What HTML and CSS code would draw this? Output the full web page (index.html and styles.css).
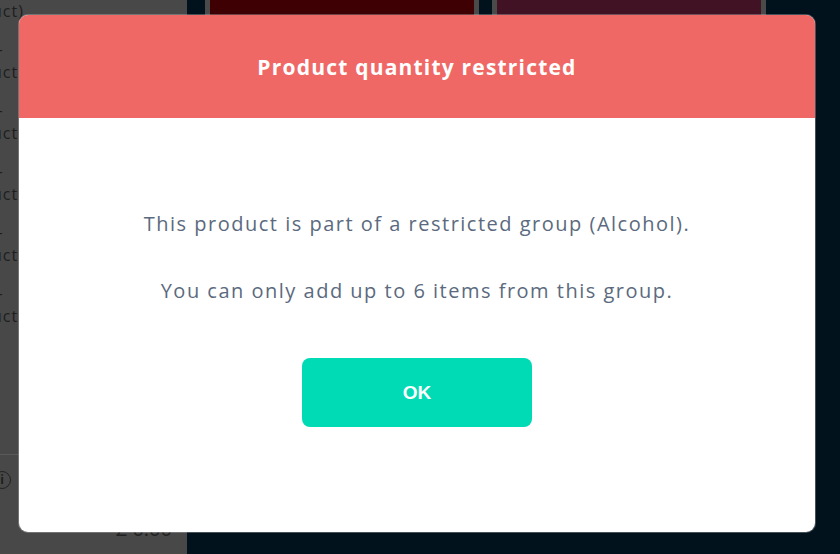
FILE: index.html
```html
<!DOCTYPE html>
<html lang="en">
<head>
<meta charset="utf-8">
<title>Product quantity restricted</title>
<link rel="stylesheet" href="styles.css">
</head>
<body>
<div class="app">
  <aside class="order">
    <div class="order-items">
      <div class="item first"><span class="tail">uct)</span></div>
      <div class="item"><span class="dash">Prod-</span><span class="tail">uct</span></div>
      <div class="item"><span class="dash">Prod-</span><span class="tail">uct</span></div>
      <div class="item"><span class="dash">Prod-</span><span class="tail">uct</span></div>
      <div class="item"><span class="dash">Prod-</span><span class="tail">uct</span></div>
      <div class="item"><span class="dash">Prod-</span><span class="tail">uct</span></div>
    </div>
    <div class="order-footer">
      <div class="info-row"><span class="info-icon">i</span></div>
      <div class="total">£ 0.00</div>
    </div>
  </aside>
  <main class="catalog">
    <div class="tiles">
      <div class="tile tile-red"></div>
      <div class="tile tile-purple"></div>
    </div>
  </main>
</div>

<div class="modal" role="dialog" aria-labelledby="modal-title">
  <header class="modal-header">
    <h1 id="modal-title">Product quantity restricted</h1>
  </header>
  <div class="modal-body">
    <p>This product is part of a restricted group (Alcohol).</p>
    <p>You can only add up to 6 items from this group.</p>
    <button class="btn-ok" type="button">OK</button>
  </div>
</div>
</body>
</html>
```

FILE: styles.css
```css
* { box-sizing: border-box; }
html, body { margin: 0; padding: 0; }
body {
  width: 840px;
  height: 554px;
  overflow: hidden;
  background: #01121d;
  font-family: "Open Sans", "Noto Sans", sans-serif;
  position: relative;
}
.app {
  display: flex;
  height: 554px;
}
.order {
  width: 187px;
  flex: none;
  background: #484848;
  display: flex;
  flex-direction: column;
  justify-content: space-between;
  color: #1e1e1e;
  font-family: "Open Sans", sans-serif;
  font-size: 16px;
  overflow: hidden;
}
.order-items { padding-top: 0; }
.item {
  height: 61px;
  display: flex;
  flex-direction: column;
  line-height: 23px;
}
.item.first { height: 38px; }
.item .dash { margin-left: -38px; height: 23px; }
.item .tail { margin-left: -8px; letter-spacing: 1px; }
.order-footer {
  display: flex;
  flex-direction: column;
}
.info-row {
  border-top: 1px solid #5a5a5a;
  height: 60px;
  padding-top: 16px;
}
.info-icon {
  display: block;
  width: 18px;
  height: 18px;
  margin-left: -7px;
  border: 1.5px solid #222;
  border-radius: 50%;
  font-size: 12px;
  line-height: 15px;
  text-align: center;
  font-weight: bold;
}
.total {
  text-align: right;
  padding-right: 15px;
  font-size: 20px;
  height: 40px;
  line-height: 30px;
  color: #222;
}
.catalog { flex: 1; }
.tiles {
  display: flex;
  gap: 13px;
  padding-left: 18px;
}
.tile {
  width: 274px;
  height: 30px;
  margin-top: -10px;
  border: 5px solid #4a4a4a;
}
.tile-red { background: #3e0003; }
.tile-purple { background: #411224; }

.modal {
  position: absolute;
  left: 19px;
  top: 15px;
  width: 796px;
  height: 517px;
  background: #fff;
  border-radius: 9px;
  overflow: hidden;
  box-shadow: 0 0 0 1px rgba(200,200,200,0.35);
}
.modal-header {
  height: 103px;
  background: #f06865;
  display: flex;
  align-items: center;
  justify-content: center;
}
.modal-header h1 {
  margin: 0;
  color: #fff;
  font-size: 21px;
  font-weight: 700;
  letter-spacing: 1.2px;
}
.modal-body {
  display: flex;
  flex-direction: column;
  align-items: center;
  padding-top: 93px;
}
.modal-body p {
  margin: 0 0 41px;
  font-size: 20px;
  line-height: 26px;
  color: #5b6a7e;
  letter-spacing: 1.5px;
}
.modal-body p + p { margin-bottom: 54px; }
.btn-ok {
  width: 230px;
  height: 69px;
  border: none;
  border-radius: 8px;
  background: #00dbb5;
  color: #fff;
  font-family: "Liberation Sans", Arial, sans-serif;
  font-weight: 700;
  font-size: 19px;
  cursor: pointer;
}
```
